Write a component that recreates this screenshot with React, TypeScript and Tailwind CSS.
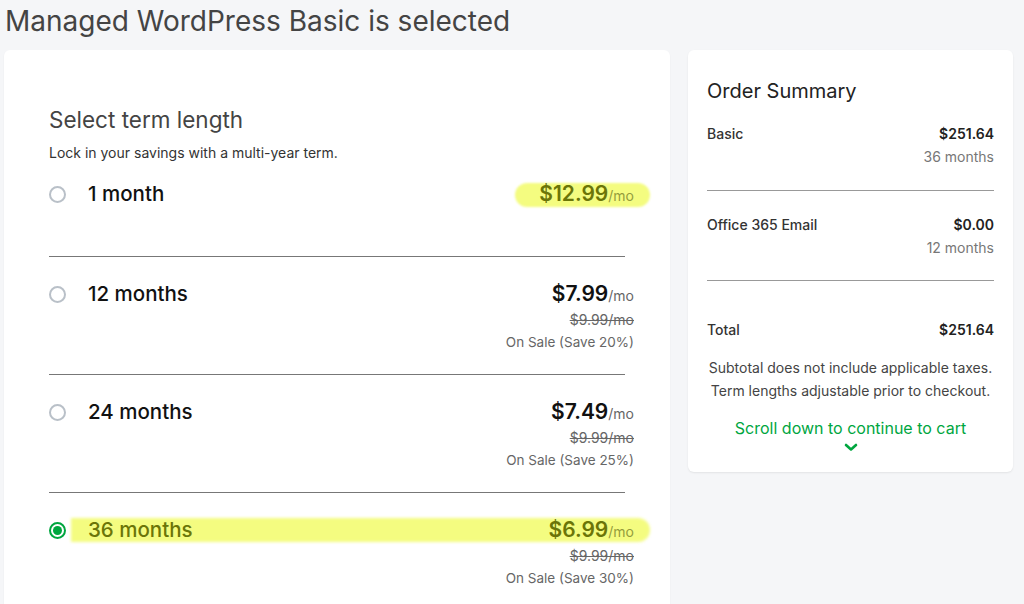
import React from "react";

const font = { fontFamily: "Inter, 'Noto Sans', 'Liberation Sans', sans-serif" };

function Radio({ checked }: { checked?: boolean }) {
  return checked ? (
    <span className="flex h-[17px] w-[17px] shrink-0 items-center justify-center rounded-full border-2 border-[#00a63f]">
      <span className="h-[9px] w-[9px] rounded-full bg-[#00a63f]" />
    </span>
  ) : (
    <span className="h-[17px] w-[17px] shrink-0 rounded-full border-2 border-[#b9c0c8]" />
  );
}

type Row = {
  label: string;
  price: string;
  old?: string;
  sale?: string;
  checked?: boolean;
  hlPrice?: boolean;
  hlRow?: boolean;
};

const rows: Row[] = [
  { label: "1 month", price: "$12.99", hlPrice: true },
  { label: "12 months", price: "$7.99", old: "$9.99/mo", sale: "On Sale (Save 20%)" },
  { label: "24 months", price: "$7.49", old: "$9.99/mo", sale: "On Sale (Save 25%)" },
  { label: "36 months", price: "$6.99", old: "$9.99/mo", sale: "On Sale (Save 30%)", checked: true, hlRow: true },
];

function TermRow({ r, first }: { r: Row; first?: boolean }) {
  const hl = r.hlPrice || r.hlRow;
  return (
    <div className={first ? "relative pt-[17px] pb-[48px]" : "relative pt-[23px] pb-[20px]"}>
      {r.hlRow && (
        <div className="pointer-events-none absolute left-[22px] right-[-16px] top-[25px] h-[24px] rounded-r-full rounded-l-[70%] bg-[#f4fc80] blur-[1.5px]" />
      )}
      <div className="relative flex items-start">
        <div className="flex h-[28px] items-center">
          <Radio checked={r.checked} />
        </div>
        <div
          className={
            "ml-[22px] flex h-[28px] items-center text-[20.5px] font-medium " +
            (r.hlRow ? "text-[#6b7508]" : "text-[#111]")
          }
        >
          {r.label}
        </div>
        <div className="ml-auto flex flex-col items-end">
          <div className="relative flex h-[28px] items-baseline">
            {r.hlPrice && (
              <div className="pointer-events-none absolute left-[-24px] right-[-16px] top-[3px] h-[24px] rounded-full bg-[#f4fc80] blur-[1px]" />
            )}
            <span
              className={
                "relative text-[21px] font-semibold leading-[28px] " + (hl ? "text-[#6b7508]" : "text-[#111]")
              }
            >
              {r.price}
            </span>
            <span className={"relative text-[14px] " + (hl ? "text-[#959c3c]" : "text-[#666]")}>/mo</span>
          </div>
          {r.old && (
            <div className="text-[14px] leading-[23px] text-[#666] line-through">{r.old}</div>
          )}
          {r.sale && <div className="text-[13.5px] leading-[23px] text-[#666]">{r.sale}</div>}
        </div>
      </div>
    </div>
  );
}

export default function App() {
  return (
    <div className="h-[604px] w-[1024px] overflow-hidden bg-[#f5f6f8]" style={font}>
      <h1 className="pl-[5px] pt-[3px] text-[28px] leading-[36px] text-[#444]">
        Managed WordPress Basic is selected
      </h1>
      <div className="mt-[11px] flex items-start">
        <div className="ml-[4px] h-[600px] w-[666px] rounded-[6px] bg-white pl-[45px] pr-[36px] pt-[55px] shadow-[0_1px_2px_rgba(0,0,0,0.06)]">
          <h2 className="text-[22.5px] leading-[30px] text-[#444]">Select term length</h2>
          <p className="mt-[8px] text-[14px] leading-[20px] text-[#333]">Lock in your savings with a multi-year term.</p>
          {rows.map((r, i) => (
            <div key={r.label}>
              {i > 0 && <div className="mr-[9px] h-px bg-[#777]" />}
              <TermRow r={r} first={i === 0} />
            </div>
          ))}
        </div>
        <div className="ml-[18px] w-[325px] rounded-[6px] bg-white px-[19px] pb-[20px] pt-[27px] shadow-[0_1px_2px_rgba(0,0,0,0.08)]">
          <h3 className="text-[20px] leading-[28px] text-[#222]">Order Summary</h3>
          <div className="mt-[18px] flex justify-between text-[14px] leading-[22px]">
            <span className="font-medium text-[#333]">Basic</span>
            <span className="font-semibold text-[#222]">$251.64</span>
          </div>
          <div className="mt-[1px] text-right text-[14px] leading-[22px] text-[#777]">36 months</div>
          <div className="mt-[22px] h-px bg-[#999]" />
          <div className="mt-[23px] flex justify-between text-[14px] leading-[22px]">
            <span className="font-medium text-[#333]">Office 365 Email</span>
            <span className="font-semibold text-[#222]">$0.00</span>
          </div>
          <div className="mt-[1px] text-right text-[14px] leading-[22px] text-[#777]">12 months</div>
          <div className="mt-[21px] h-px bg-[#999]" />
          <div className="mt-[38px] flex justify-between text-[14px] leading-[22px]">
            <span className="font-medium text-[#333]">Total</span>
            <span className="font-semibold text-[#222]">$251.64</span>
          </div>
          <p className="mt-[15px] text-center text-[14px] leading-[23px] text-[#444]">
            Subtotal does not include applicable taxes.
            <br />
            Term lengths adjustable prior to checkout.
          </p>
          <div className="mt-[15px] text-center text-[16px] leading-[22px] text-[#00a63f]">
            Scroll down to continue to cart
          </div>
          <div className="mt-[4px] flex justify-center">
            <svg width="14" height="9" viewBox="0 0 14 9" fill="none">
              <path d="M2 2l5 4.5L12 2" stroke="#00a63f" strokeWidth="2.6" strokeLinecap="round" strokeLinejoin="round" />
            </svg>
          </div>
        </div>
      </div>
    </div>
  );
}
